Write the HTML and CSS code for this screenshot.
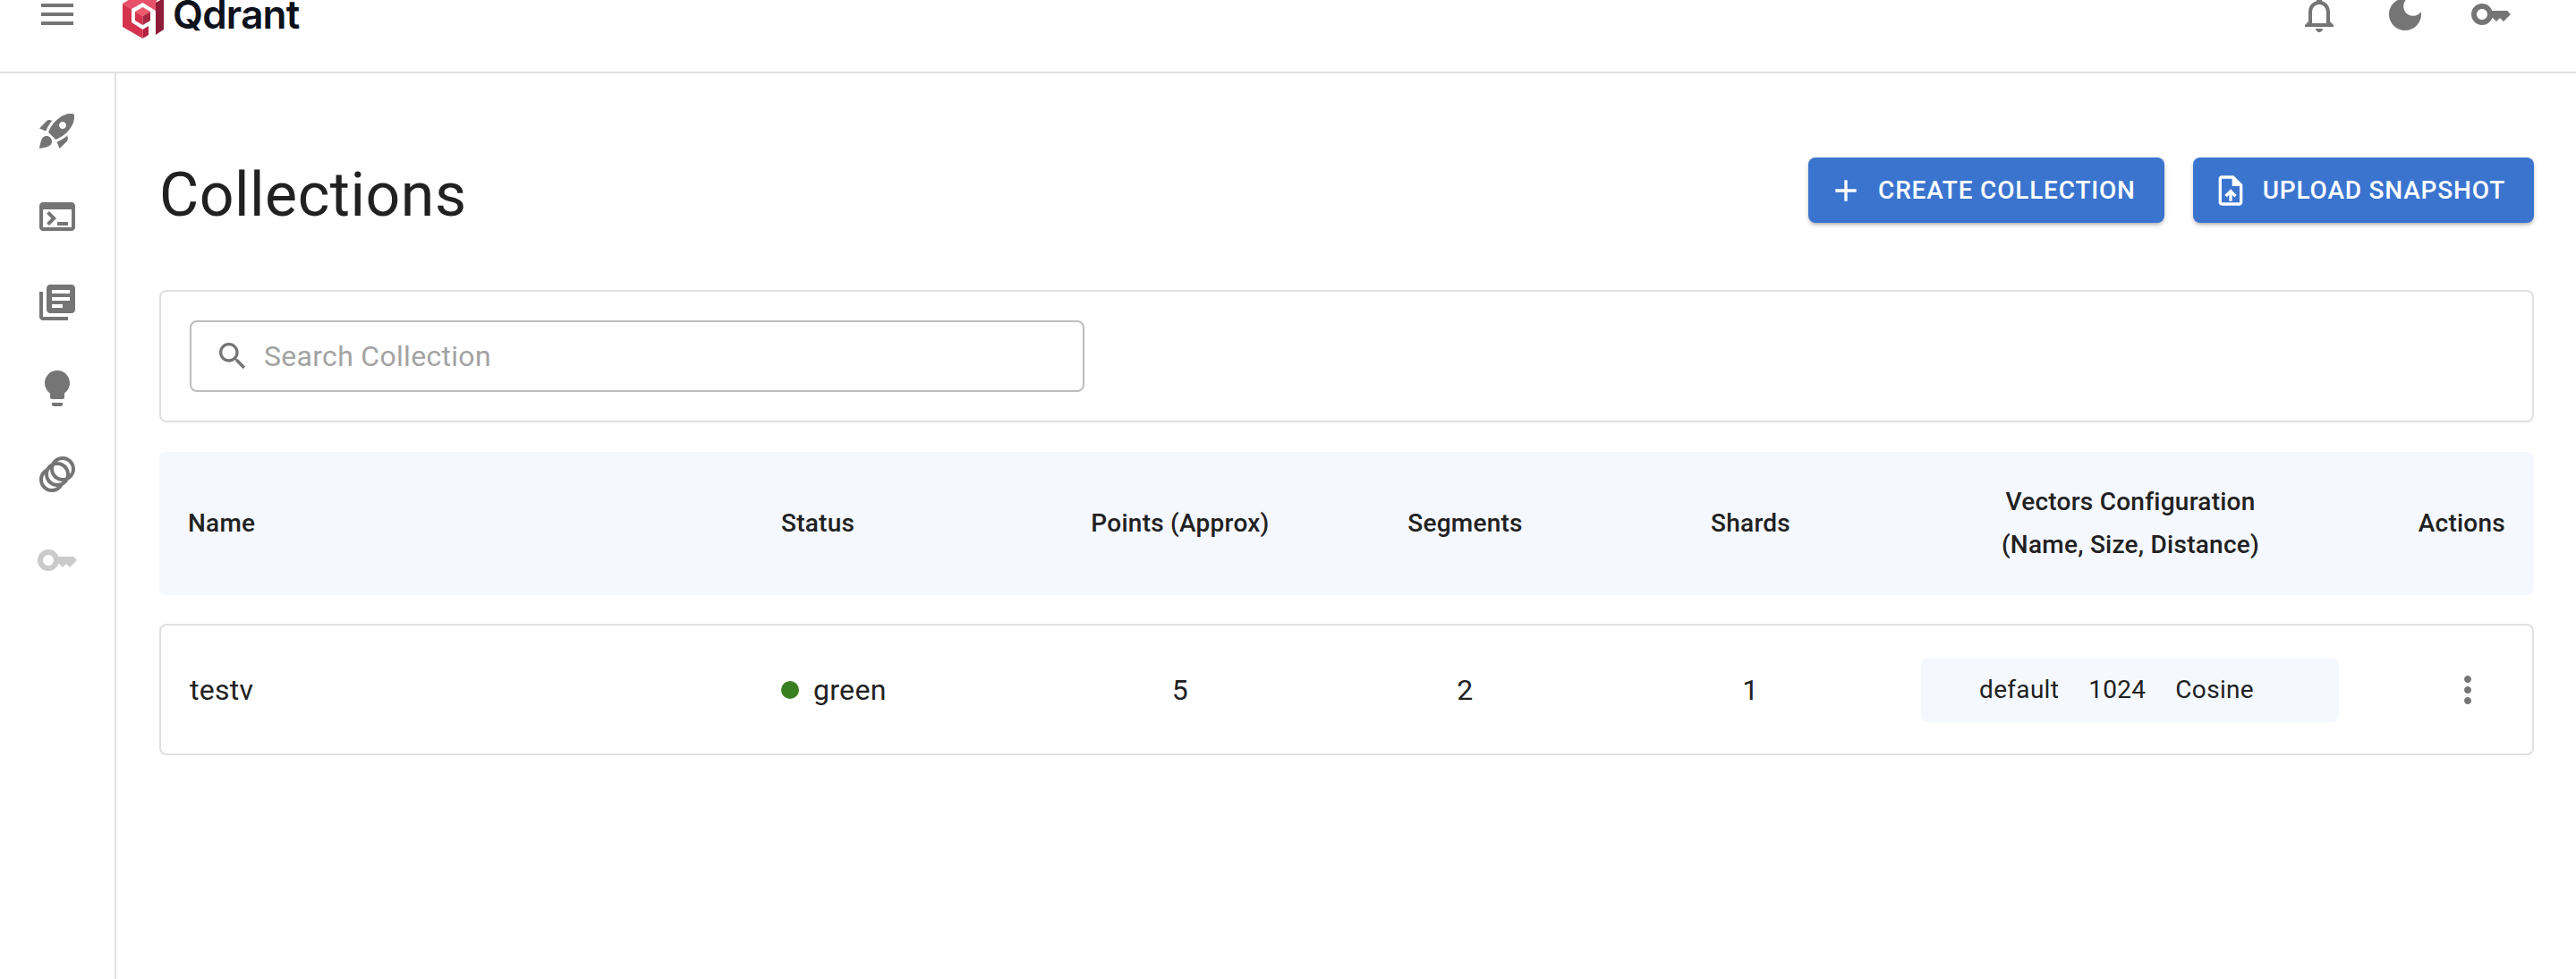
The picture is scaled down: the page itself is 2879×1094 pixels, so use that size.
FILE: index.html
```html
<!DOCTYPE html>
<html lang="en">
<head>
<meta charset="utf-8">
<title>Qdrant Collections</title>
<link rel="stylesheet" href="styles.css">
</head>
<body>
<header class="topbar">
  <button class="icon-btn menu-btn" aria-label="menu">
    <svg class="icon" viewBox="0 0 24 24"><path d="M3 18h18v-2H3v2zm0-5h18v-2H3v2zm0-7v2h18V6H3z"/></svg>
  </button>
  <div class="brand">
    <svg class="logo" viewBox="0 -14 46 60" aria-hidden="true">
      <polygon fill="#e8506a" points="0,4 10,-2 40,-2 37,3 37,12 22.5,3 10,10"/>
      <polygon fill="#d5324e" points="0,4 10,10 10,25 22.5,33 22.5,43 0,30"/>
      <polygon fill="#8f1d38" points="37,3 46,-2 46,33 37,39"/>
      <polygon fill="#b5213f" points="22.5,33 29,29 29,39 22.5,43"/>
      <polygon fill="#ee5a6c" points="14,13 22.5,8 31,13 22.5,18"/>
      <polygon fill="#d5324e" points="14,13 22.5,18 22.5,28 14,23"/>
      <polygon fill="#a82642" points="22.5,18 31,13 31,23 22.5,28"/>
    </svg>
    <span class="brand-name">Qdrant</span>
  </div>
  <div class="top-actions">
    <button class="icon-btn" aria-label="notifications"><svg class="icon" viewBox="0 0 24 24"><path d="M12 22c1.1 0 2-.9 2-2h-4c0 1.1.9 2 2 2zm6-6v-5c0-3.07-1.63-5.64-4.5-6.32V4c0-.83-.67-1.5-1.5-1.5s-1.5.67-1.5 1.5v.68C7.64 5.36 6 7.92 6 11v5l-2 2v1h16v-1l-2-2zm-2 1H8v-6c0-2.48 1.51-4.5 4-4.5s4 2.02 4 4.5v6z"/></svg></button>
    <button class="icon-btn" aria-label="theme"><svg class="icon" viewBox="0 0 24 24"><path d="M12 3c-4.97 0-9 4.03-9 9s4.03 9 9 9 9-4.03 9-9c0-.46-.04-.92-.1-1.36-.98 1.37-2.58 2.26-4.4 2.26-2.98 0-5.4-2.42-5.4-5.4 0-1.81.89-3.42 2.26-4.4-.44-.06-.9-.1-1.36-.1z"/></svg></button>
    <button class="icon-btn" aria-label="api key"><svg class="icon" viewBox="0 0 24 24"><path d="M21 10h-8.35C11.83 7.67 9.61 6 7 6c-3.31 0-6 2.69-6 6s2.69 6 6 6c2.61 0 4.83-1.67 5.65-4H13l2 2 2-2 2 2 4-4.04L21 10zM7 15c-1.65 0-3-1.35-3-3s1.35-3 3-3 3 1.35 3 3-1.35 3-3 3z"/></svg></button>
  </div>
</header>
<div class="shell">
  <nav class="sidebar">
    <a class="nav-item"><svg class="icon" viewBox="0 0 24 24"><path d="M9.19 6.35c-2.04 2.29-3.44 5.58-3.57 5.89L2 10.69l4.05-4.05c.47-.47 1.15-.68 1.81-.55l1.33.26zM11.17 17s3.74-1.55 5.89-3.7c5.4-5.4 4.5-9.62 4.21-10.57-.95-.3-5.17-1.19-10.57 4.21C8.55 9.09 7 12.83 7 12.83L11.17 17zm6.48-2.19c-2.29 2.04-5.58 3.44-5.89 3.57L13.31 22l4.05-4.05c.47-.47.68-1.15.55-1.81l-.26-1.33zM9 18c0 .83-.34 1.58-.88 2.12C6.94 21.3 2 22 2 22s.7-4.94 1.88-6.12C4.42 15.34 5.17 15 6 15c1.66 0 3 1.34 3 3zm4-9c0-1.1.9-2 2-2s2 .9 2 2-.9 2-2 2-2-.9-2-2z"/></svg></a>
    <a class="nav-item"><svg class="icon" viewBox="0 0 24 24"><path d="M20 4H4c-1.11 0-2 .9-2 2v12c0 1.1.89 2 2 2h16c1.1 0 2-.9 2-2V6c0-1.1-.9-2-2-2zm0 14H4V8h16v10zm-2-1h-6v-2h6v2zM7.5 17l-1.41-1.41L8.67 13l-2.59-2.59L7.5 9l4 4-4 4z"/></svg></a>
    <a class="nav-item"><svg class="icon" viewBox="0 0 24 24"><path d="M4 6H2v14c0 1.1.9 2 2 2h14v-2H4V6zm16-4H8c-1.1 0-2 .9-2 2v12c0 1.1.9 2 2 2h12c1.1 0 2-.9 2-2V4c0-1.1-.9-2-2-2zm-1 9H9V9h10v2zm-4 4H9v-2h6v2zm4-8H9V5h10v2z"/></svg></a>
    <a class="nav-item"><svg class="icon" viewBox="0 0 24 24"><path d="M9 21c0 .5.4 1 1 1h4c.6 0 1-.5 1-1v-1H9v1zm3-19C8.1 2 5 5.1 5 9c0 2.4 1.2 4.5 3 5.7V17c0 .5.4 1 1 1h6c.6 0 1-.5 1-1v-2.3c1.8-1.3 3-3.4 3-5.7 0-3.9-3.1-7-7-7z"/></svg></a>
    <a class="nav-item"><svg class="icon" viewBox="0 0 24 24"><path d="M15 2c-2.71 0-5.05 1.54-6.22 3.78-1.28.67-2.34 1.72-3 3C3.54 9.95 2 12.29 2 15c0 3.87 3.13 7 7 7 2.71 0 5.05-1.54 6.22-3.78 1.28-.67 2.34-1.72 3-3C20.46 14.05 22 11.71 22 9c0-3.87-3.13-7-7-7zM9 20c-2.76 0-5-2.24-5-5 0-1.12.37-2.16 1-3 0 3.87 3.13 7 7 7-.84.63-1.88 1-3 1zm3-3c-2.76 0-5-2.24-5-5 0-1.12.37-2.16 1-3 0 3.86 3.13 6.99 7 7-.84.63-1.88 1-3 1zm4.7-3.3c-.53.19-1.1.3-1.7.3-2.76 0-5-2.24-5-5 0-.6.11-1.17.3-1.7.53-.19 1.1-.3 1.7-.3 2.76 0 5 2.24 5 5 0 .6-.11 1.17-.3 1.7zM19 12c0-3.86-3.13-6.99-7-7 .84-.63 1.87-1 3-1 2.76 0 5 2.24 5 5 0 1.12-.37 2.16-1 3z"/></svg></a>
    <a class="nav-item disabled"><svg class="icon" viewBox="0 0 24 24"><path d="M21 10h-8.35C11.83 7.67 9.61 6 7 6c-3.31 0-6 2.69-6 6s2.69 6 6 6c2.61 0 4.83-1.67 5.65-4H13l2 2 2-2 2 2 4-4.04L21 10zM7 15c-1.65 0-3-1.35-3-3s1.35-3 3-3 3 1.35 3 3-1.35 3-3 3z"/></svg></a>
  </nav>
  <main class="content">
    <div class="title-row">
      <h1 class="title">Collections</h1>
      <div class="title-actions">
        <button class="btn create-btn"><svg class="btn-icon" viewBox="0 0 24 24"><path d="M19 13h-6v6h-2v-6H5v-2h6V5h2v6h6v2z"/></svg>CREATE COLLECTION</button>
        <button class="btn upload-btn"><svg class="btn-icon" viewBox="0 0 24 24"><path d="M14 2H6c-1.1 0-1.99.9-1.99 2L4 20c0 1.1.89 2 1.99 2H18c1.1 0 2-.9 2-2V8l-6-6zm4 18H6V4h7v5h5v11zM8 15.01l1.41 1.41L11 14.84V19h2v-4.16l1.59 1.59L16 15.01 12.01 11 8 15.01z"/></svg>UPLOAD SNAPSHOT</button>
      </div>
    </div>
    <section class="card search-card">
      <label class="search-box">
        <svg class="search-icon" viewBox="0 0 24 24"><path d="M15.5 14h-.79l-.28-.27C15.41 12.59 16 11.11 16 9.5 16 5.91 13.09 3 9.5 3S3 5.91 3 9.5 5.91 16 9.5 16c1.61 0 3.09-.59 4.23-1.57l.27.28v.79l5 4.99L20.49 19l-4.99-5zm-6 0C7.01 14 5 11.99 5 9.5S7.01 5 9.5 5 14 7.01 14 9.5 11.99 14 9.5 14z"/></svg>
        <span class="placeholder">Search Collection</span>
      </label>
    </section>
    <section class="table-grid table-head">
      <div class="cell-left">Name</div>
      <div class="cell-left">Status</div>
      <div class="cell-center">Points (Approx)</div>
      <div class="cell-center">Segments</div>
      <div class="cell-center">Shards</div>
      <div class="cell-center">Vectors Configuration<br>(Name, Size, Distance)</div>
      <div class="cell-right">Actions</div>
    </section>
    <section class="card table-grid table-row">
      <div class="cell-left name-cell">testv</div>
      <div class="cell-left status"><span class="dot"></span>green</div>
      <div class="cell-center">5</div>
      <div class="cell-center">2</div>
      <div class="cell-center">1</div>
      <div class="vectors"><span>default</span><span>1024</span><span>Cosine</span></div>
      <div class="cell-right">
        <svg class="dots" viewBox="0 0 24 24"><path d="M12 8c1.1 0 2-.9 2-2s-.9-2-2-2-2 .9-2 2 .9 2 2 2zm0 2c-1.1 0-2 .9-2 2s.9 2 2 2 2-.9 2-2-.9-2-2-2zm0 6c-1.1 0-2 .9-2 2s.9 2 2 2 2-.9 2-2-.9-2-2-2z"/></svg>
      </div>
    </section>
  </main>
</div>
</body>
</html>
```
FILE: styles.css
```css
* { box-sizing: border-box; }
html, body { margin: 0; height: 100%; overflow: hidden; background: #fff; }
body { font-family: Roboto, "Liberation Sans", sans-serif; color: #212121; }

.topbar {
  display: flex;
  align-items: center;
  height: 130px;
  margin-top: -48px;
  padding: 0 47px 0 16px;
  border-bottom: 2px solid #e0e0e0;
}
.icon-btn {
  display: flex;
  align-items: center;
  justify-content: center;
  width: 96px;
  height: 96px;
  padding: 0;
  border: 0;
  background: none;
}
.menu-btn { margin-right: 25px; }
.icon { width: 48px; height: 48px; fill: #757575; display: block; }
.brand { display: flex; align-items: center; gap: 10px; }
.logo { width: 46px; height: 60px; display: block; }
.brand-name { font-family: Inter, "Liberation Sans", sans-serif; font-weight: 600; font-size: 44px; line-height: 46px; letter-spacing: -.8px; color: #0d111c; }
.top-actions { display: flex; margin-left: auto; }

.shell { display: flex; height: calc(100vh - 82px); }
.sidebar { width: 130px; flex: none; padding-top: 16px; border-right: 2px solid #e0e0e0; }
.nav-item { display: flex; align-items: center; justify-content: center; height: 96px; }
.nav-item.disabled .icon { opacity: .38; }

.content { flex: 1; padding: 94px 47px 0 48px; }
.title-row { display: flex; align-items: flex-start; justify-content: space-between; height: 148px; }
.title { margin: 0; font-size: 68px; font-weight: 400; line-height: 84px; letter-spacing: .5px; }
.title-actions { display: flex; gap: 32px; }
.btn {
  display: flex;
  align-items: center;
  height: 73px;
  padding: 0 32px 0 22px;
  border: 0;
  border-radius: 8px;
  background: #3a74cf;
  color: #fff;
  font-family: inherit;
  font-size: 28px;
  font-weight: 500;
  letter-spacing: .8px;
  box-shadow: 0 3px 4px -2px rgba(0,0,0,.3), 0 2px 6px rgba(0,0,0,.14);
}
.btn-icon { width: 40px; height: 40px; fill: #fff; margin-right: 16px; }

.card { border: 2px solid #e0e0e0; border-radius: 8px; background: #fff; }
.search-card { height: 148px; padding: 32px; }
.search-box {
  display: flex;
  align-items: center;
  width: 1000px;
  height: 80px;
  padding: 0 26px;
  border: 2px solid #bdbdbd;
  border-radius: 8px;
}
.search-icon { width: 40px; height: 40px; fill: #757575; margin-right: 15px; }
.placeholder { font-size: 32px; letter-spacing: .3px; color: #a3a3a3; }

.table-grid {
  display: grid;
  grid-template-columns: 663px 287px 318px 319px 319px 530px 154px;
  align-items: center;
  padding: 0 30px;
  font-size: 32px;
  letter-spacing: .3px;
}
.table-head {
  height: 160px;
  margin-top: 33px;
  padding: 0 32px;
  border-radius: 8px;
  background: #f5f8fe;
  font-size: 28px;
  font-weight: 500;
  letter-spacing: .25px;
  line-height: 48px;
}
.table-row { height: 147px; margin-top: 32px; }
.name-cell { padding-left: 2px; }
.cell-left { text-align: left; }
.cell-center { text-align: center; }
.cell-right { display: flex; justify-content: flex-end; }
.status { display: flex; align-items: center; }
.dot { width: 20px; height: 20px; border-radius: 50%; background: #38801f; margin-right: 16px; }
.vectors {
  display: flex;
  align-items: center;
  justify-content: center;
  gap: 33px;
  height: 72px;
  margin: 0 32px 0 31px;
  padding-right: 30px;
  border-radius: 8px;
  background: #f5f8fe;
  font-size: 28px;
}
.dots { width: 48px; height: 48px; fill: #757575; margin-right: 18px; }
```
